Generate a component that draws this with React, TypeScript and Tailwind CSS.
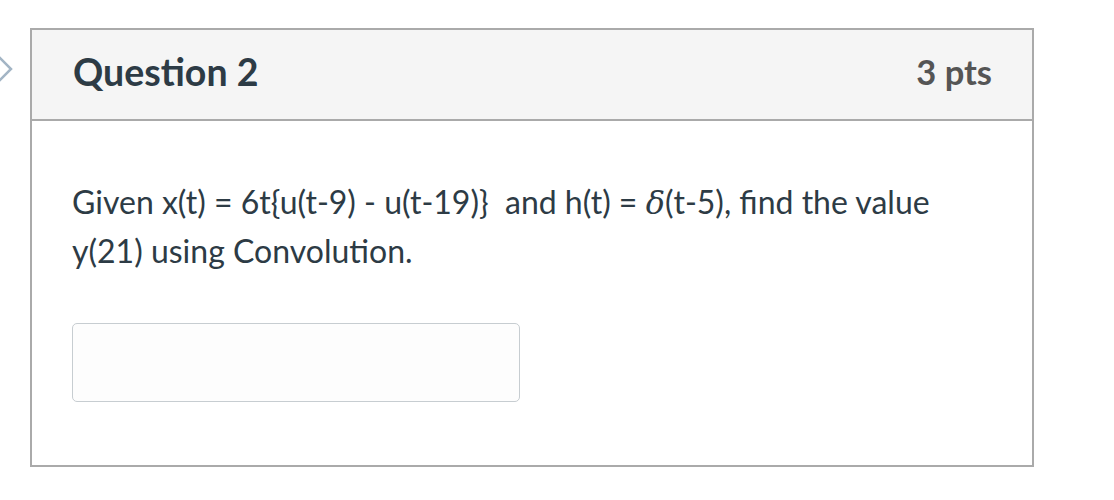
import React from "react";

export default function App() {
  return (
    <div className="w-[1114px] h-[500px] bg-white relative" style={{ fontFamily: "Lato, 'Noto Sans', sans-serif" }}>
      <svg className="absolute left-0 top-[54px]" width="14" height="30" viewBox="0 0 14 30">
        <path d="M-2 2 L11 15 L-2 28" fill="none" stroke="#a3b5c5" strokeWidth="2.5" />
      </svg>
      <div className="pt-[28px] pl-[30px]">
        <div className="w-[1004px] border-2 border-[#aaaaaa]">
          <div className="h-[91px] bg-[#f5f5f5] border-b-2 border-[#aaaaaa] flex items-center justify-between pl-[41px] pr-[40px] pb-[5px]">
            <div className="text-[37.5px] font-bold text-[#2d3b45] leading-none">Question 2</div>
            <div className="text-[34.5px] font-bold text-[#555555] leading-none">3 pts</div>
          </div>
          <div className="pl-[40px] pr-[40px] pt-[57px] h-[344px]">
            <p className="text-[32px] text-[#2d3b45] leading-[48px]">
              Given x(t) = 6t{"{"}u(t-9) - u(t-19){"}"}&nbsp; and h(t) = <span style={{ fontFamily: "'DejaVu Serif', serif" }} className="italic">δ</span>(t-5), find the value y(21) using Convolution.
            </p>
            <div className="mt-[48px] w-[448px] h-[79px] border-[1.5px] border-[#c7cdd1] rounded-[5px] bg-[#fdfdfd]"></div>
          </div>
        </div>
      </div>
    </div>
  );
}
